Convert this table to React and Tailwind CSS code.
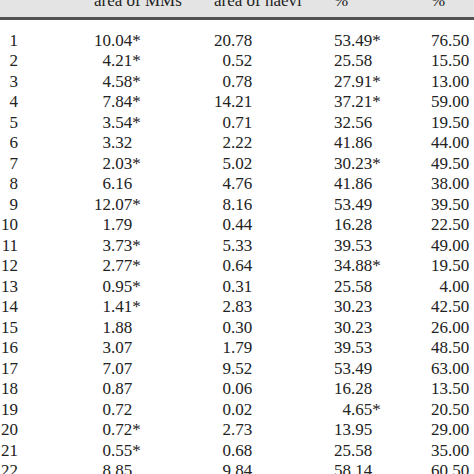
import React from "react";

const rows = [
  ["1", "10.04*", "20.78", "53.49*", "76.50"],
  ["2", "4.21*", "0.52", "25.58", "15.50"],
  ["3", "4.58*", "0.78", "27.91*", "13.00"],
  ["4", "7.84*", "14.21", "37.21*", "59.00"],
  ["5", "3.54*", "0.71", "32.56", "19.50"],
  ["6", "3.32", "2.22", "41.86", "44.00"],
  ["7", "2.03*", "5.02", "30.23*", "49.50"],
  ["8", "6.16", "4.76", "41.86", "38.00"],
  ["9", "12.07*", "8.16", "53.49", "39.50"],
  ["10", "1.79", "0.44", "16.28", "22.50"],
  ["11", "3.73*", "5.33", "39.53", "49.00"],
  ["12", "2.77*", "0.64", "34.88*", "19.50"],
  ["13", "0.95*", "0.31", "25.58", "4.00"],
  ["14", "1.41*", "2.83", "30.23", "42.50"],
  ["15", "1.88", "0.30", "30.23", "26.00"],
  ["16", "3.07", "1.79", "39.53", "48.50"],
  ["17", "7.07", "9.52", "53.49", "63.00"],
  ["18", "0.87", "0.06", "16.28", "13.50"],
  ["19", "0.72", "0.02", "4.65*", "20.50"],
  ["20", "0.72*", "2.73", "13.95", "29.00"],
  ["21", "0.55*", "0.68", "25.58", "35.00"],
  ["22", "8.85", "9.84", "58.14", "60.50"],
];

// decimal-aligned number: integer part in a fixed right-aligned box
const Num = ({ value }) => {
  const dot = value.indexOf(".");
  return (
    <span className="whitespace-nowrap">
      <span className="inline-block w-[17px] text-right">{value.slice(0, dot)}</span>
      {value.slice(dot)}
    </span>
  );
};

const grid = "grid grid-cols-[94px_120px_120px_97px_1fr]";

export default function App() {
  return (
    <div className="w-[474px] h-[474px] overflow-hidden bg-white text-[#222] font-['Liberation_Serif',serif] text-[17px]">
      <div className="h-[17px] overflow-hidden bg-[#e4e4e4]">
        <div className={`${grid} -mt-[8px] leading-[17px]`}>
          <span></span>
          <span className="whitespace-nowrap">area of MMs</span>
          <span className="whitespace-nowrap">area of naevi</span>
          <span>%</span>
          <span>%</span>
        </div>
      </div>
      <div className="h-[3px] bg-[#525252]"></div>
      <div className="pt-[10.7px]">
        {rows.map((r) => (
          <div key={r[0]} className={`${grid} h-[20.5px] leading-[20.5px]`}>
            <span className="w-[18px] text-right">{r[0]}</span>
            <Num value={r[1]} />
            <Num value={r[2]} />
            <Num value={r[3]} />
            <Num value={r[4]} />
          </div>
        ))}
      </div>
    </div>
  );
}
